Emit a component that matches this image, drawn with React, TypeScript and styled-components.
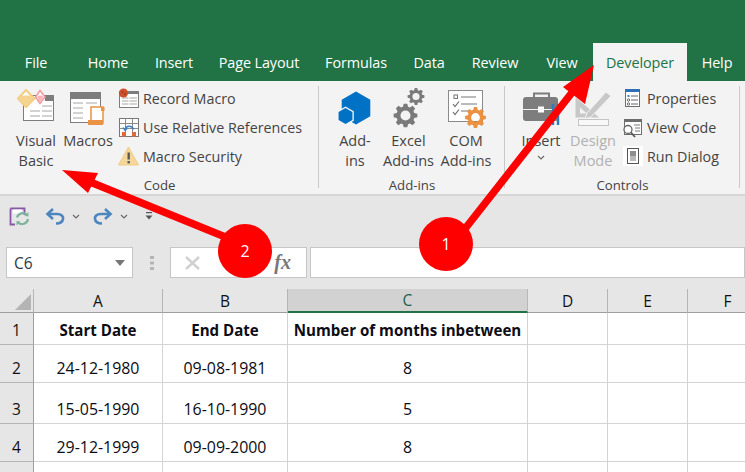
import React from "react";
import styled, { createGlobalStyle } from "styled-components";

const Global = createGlobalStyle`
  html, body { margin: 0; padding: 0; background: #fff; }
  * { box-sizing: border-box; }
`;
const FONT = `"Open Sans", "Noto Sans", "Liberation Sans", sans-serif`;

const Page = styled.div`
  position: relative; width: 745px; height: 472px; overflow: hidden;
  font-family: ${FONT}; color: #444; background: #e6e6e6;
`;
const TitleBar = styled.div`height: 43px; background: #217346;`;
const TabBar = styled.nav`display: flex; height: 38px; background: #217346;`;
const Tab = styled.div<{ $w: number; $ml?: number; $active?: boolean }>`
  width: ${p => p.$w}px; margin-left: ${p => p.$ml ?? 0}px; flex: none; display: flex; align-items: center; justify-content: center;
  font-size: 14.4px; letter-spacing: -0.1px; white-space: nowrap;
  color: ${p => (p.$active ? "#217346" : "#fff")};
  background: ${p => (p.$active ? "#f3f3f3" : "transparent")};
`;
const Ribbon = styled.div`
  display: flex; height: 115px; background: #f3f3f3; border-bottom: 2px solid #d6d6d6;
`;
const Group = styled.section<{ $w: number }>`
  width: ${p => p.$w}px; flex: none; display: flex; flex-direction: column; position: relative;
  &::after { content: ""; position: absolute; right: 0; top: 5px; bottom: 6px; width: 1px; background: #c9c9c9; }
`;
const GroupBody = styled.div<{ $pad: number }>`
  flex: 1; display: flex; padding-left: ${p => p.$pad}px; padding-top: 4px;
`;
const GroupLabel = styled.div`
  height: 23px; padding-top: 4px; display: flex; justify-content: center; align-items: center;
  font-size: 13.2px; color: #444;
`;
const BigButton = styled.div<{ $w: number; $off?: boolean }>`
  width: ${p => p.$w}px; flex: none; display: flex; flex-direction: column; align-items: center;
  color: ${p => (p.$off ? "#b1b1b1" : "#444")};
`;
const BigIcon = styled.div`height: 36px; margin-top: 4px; margin-bottom: 6px; width: 40px; flex: none;`;
const BigLabel = styled.div`
  font-size: 14.5px; line-height: 19.5px; text-align: center; white-space: nowrap;
`;
const Caret = styled.div`height: 14px; display: flex; justify-content: center; align-items: center;`;
const SmallStack = styled.div<{ $ml: number }>`display: flex; flex-direction: column; margin: -1px 0 0 ${p => p.$ml}px;`;
const SmallRow = styled.div`height: 29px; display: flex; align-items: center; gap: 3px; font-size: 14.3px; white-space: nowrap;`;
const SmallIcon = styled.div`width: 22px; height: 22px; flex: none;`;

const Qat = styled.div`display: flex; align-items: center; height: 44px; padding: 0 0 3px 9px;`;
const QatIcon = styled.div<{ $gap: number }>`margin-right: ${p => p.$gap}px; display: flex; flex: none;`;

const FormulaBar = styled.div`display: flex; height: 31px; margin-top: 7px; padding-left: 6px; align-items: stretch;`;
const Field = styled.div<{ $w?: number }>`
  ${p => (p.$w ? `width:${p.$w}px; flex:none;` : "flex:1;")}
  background: #fff; border: 1px solid #c6c6c6; display: flex; align-items: center;
`;
const NameBox = styled(Field)`
  justify-content: space-between; padding: 0 7px 0 7px; font-size: 15.5px; color: #2a3a48;
`;
const Grip = styled.div`width: 37px; flex: none; display: flex; justify-content: center; align-items: center;`;
const FxBox = styled(Field)`margin-right: 3px; justify-content: space-between; padding: 0 15px 0 14px;`;
const FxText = styled.span`font-family: "Liberation Serif", serif; font-style: italic; font-weight: 700; font-size: 20px; color: #777;`;

const Sheet = styled.div`
  display: grid; margin-top: 11px;
  grid-template-columns: 34px 129px 125px 240px 80px 80px 80px;
  grid-template-rows: 24px 32px 38px 41px 38px 30px;
`;
const Corner = styled.div`
  background: #e6e6e6; border-right: 1px solid #b5b5b5; border-bottom: 1px solid #9e9e9e;
  display: flex; align-items: flex-end; justify-content: flex-end; padding: 0 2px 2px 0;
`;
const ColHead = styled.div<{ $sel?: boolean }>`
  background: ${p => (p.$sel ? "#d2d2d2" : "#e6e6e6")};
  border-right: 1px solid ${p => (p.$sel ? "#b8b8b8" : "#b5b5b5")};
  border-bottom: ${p => (p.$sel ? "2px solid #217346" : "1px solid #9e9e9e")};
  display: flex; align-items: center; justify-content: center;
  font-size: 15.5px; color: ${p => (p.$sel ? "#1f5f4a" : "#111")};
`;
const RowHead = styled.div`
  background: #e6e6e6; border-right: 1px solid #9e9e9e; border-bottom: 1px solid #b5b5b5;
  display: flex; align-items: flex-end; justify-content: center; font-size: 15.5px; line-height: 20px;
  padding-bottom: 4px; color: #111;
`;
const Cell = styled.div<{ $bold?: boolean }>`
  background: #fff; border-right: 1px solid #d4d4d4; border-bottom: 1px solid #d4d4d4;
  display: flex; align-items: flex-end; justify-content: center; white-space: nowrap;
  line-height: 20px; padding-bottom: 4px;
  font-size: ${p => (p.$bold ? "15.1px" : "15.9px")}; font-weight: ${p => (p.$bold ? 700 : 400)}; color: #0c0c14;
`;

const Overlay = styled.svg`position: absolute; left: 0; top: 0; pointer-events: none;`;
const Badge = styled.div<{ $x: number; $y: number }>`
  position: absolute; left: ${p => p.$x - 27}px; top: ${p => p.$y - 27}px; width: 54px; height: 54px;
  border-radius: 50%; background: #fe0000; color: #fff; font-size: 16px;
  display: flex; align-items: center; justify-content: center;
`;

function gearPath(cx: number, cy: number, R: number, r: number, hole: number, teeth = 8) {
  let d = "";
  const step = (Math.PI * 2) / teeth;
  for (let i = 0; i < teeth; i++) {
    const a = i * step - Math.PI / 2;
    const w = step * 0.24;
    const pts = [
      [r, a - step * 0.36], [R, a - w * 0.8], [R, a + w * 0.8], [r, a + step * 0.36],
    ];
    pts.forEach(([rad, ang], j) => {
      const x = (cx + rad * Math.cos(ang)).toFixed(2);
      const y = (cy + rad * Math.sin(ang)).toFixed(2);
      d += `${i === 0 && j === 0 ? "M" : "L"}${x} ${y} `;
    });
  }
  d += `Z M${cx - hole} ${cy} a${hole} ${hole} 0 1 0 ${hole * 2} 0 a${hole} ${hole} 0 1 0 ${-hole * 2} 0 Z`;
  return d;
}
const Gear = (p: { cx: number; cy: number; R: number; fill: string }) => (
  <path d={gearPath(p.cx, p.cy, p.R, p.R * 0.76, p.R * 0.42)} fill={p.fill} fillRule="evenodd" />
);

const Ico = (p: { w?: number; h?: number; children: React.ReactNode }) => {
  const w = p.w ?? 40, h = p.h ?? 36;
  return <svg width={w} height={h} viewBox={`0 0 ${w} ${h}`} style={{ display: "block", overflow: "visible" }}>{p.children}</svg>;
};

const SheetLines = (p: { x: number; y: number; w: number; n: number; gap?: number; color?: string }) => (
  <>
    {Array.from({ length: p.n }).map((_, i) => (
      <line key={i} x1={p.x} x2={p.x + p.w} y1={p.y + i * (p.gap ?? 5)} y2={p.y + i * (p.gap ?? 5)} stroke={p.color ?? "#a6a6a6"} strokeWidth={1} />
    ))}
  </>
);

const VisualBasicIcon = () => (
  <Ico>
    <g transform="translate(0 -2)">
      <rect x="7.5" y="8.5" width="30" height="25" fill="#fff" stroke="#7d7d7d" />
      <rect x="29" y="8" width="9" height="6" fill="#7d7d7d" />
      <SheetLines x={14} y={24} w={10} n={2} gap={5} />
      <SheetLines x={26} y={19} w={10} n={3} gap={5} />
      <path d="M10 3 L18.5 11.5 L10 20 L2 11.5 Z" fill="#fff" stroke="#f3cd82" strokeWidth="2" />
      <path d="M3 11.5 L10 19 L17.5 11.5 L14 8.5 L6 8.5 Z" fill="#f5d48f" />
      <path d="M24 3.5 L29 10 L24 16.5 L19.5 10 Z" fill="#fff" stroke="#ee9aa0" strokeWidth="1.6" />
      <path d="M21 10 L24 15 L27.5 10 L25.5 8.5 L22.5 8.5 Z" fill="#f6b4b8" />
    </g>
  </Ico>
);
const MacrosIcon = () => (
  <Ico>
    <rect x="2.5" y="3.5" width="30" height="30" fill="#fff" stroke="#7d7d7d" />
    <rect x="2" y="3" width="31" height="7" fill="#7d7d7d" />
    <SheetLines x={5} y={14} w={10} n={4} gap={5} />
    <SheetLines x={18} y={14} w={11} n={1} />
    <rect x="23" y="18" width="12" height="16" fill="#fff" stroke="#ea9a4c" strokeWidth="1.6" />
    <rect x="33" y="18" width="3.5" height="4" fill="#ea9344" />
    <rect x="20" y="31" width="15" height="5" fill="#ea9344" />
  </Ico>
);
const RecordIcon = () => (
  <Ico w={22} h={22}>
    <rect x="1.5" y="3.5" width="19" height="16" fill="#fff" stroke="#7d7d7d" />
    <rect x="8" y="3" width="13" height="3" fill="#7d7d7d" />
    <SheetLines x={4} y={10} w={15} n={3} gap={3} />
    <line x1="11" x2="11" y1="7" y2="19" stroke="#fff" />
    <circle cx="5.5" cy="5" r="4.6" fill="#d0522c" />
    <circle cx="4.5" cy="4" r="1" fill="#a5341c" /><circle cx="7" cy="6" r="1" fill="#a5341c" />
  </Ico>
);
const RelativeIcon = () => (
  <Ico w={22} h={22}>
    <rect x="1.5" y="1.5" width="19" height="18" fill="#fff" stroke="#777" />
    <path d="M1.5 6.5H20.5M1.5 11.5H20.5M7.5 1.5V19.5M14.5 1.5V19.5" stroke="#8a8a8a" fill="none" />
    <rect x="4" y="15" width="4" height="4.5" fill="#e2683c" />
    <rect x="14" y="15" width="4" height="4.5" fill="#e2683c" />
    <path d="M7 12.5 C8 8.5 14 8 15.5 12.5" stroke="#3d7fc4" strokeWidth="1.5" fill="none" />
    <path d="M5 10.5 L7 13.5 L9.5 11" stroke="#3d7fc4" strokeWidth="1.3" fill="none" />
  </Ico>
);
const SecurityIcon = () => (
  <Ico w={22} h={22}>
    <path d="M10.5 1 L20.5 19 H0.5 Z" fill="#f5d79a" stroke="#f1cb84" strokeLinejoin="round" />
    <rect x="9.5" y="6.5" width="2.4" height="7" fill="#5a5a5a" />
    <rect x="9.5" y="15" width="2.4" height="2.4" fill="#5a5a5a" />
  </Ico>
);
const hex = (cx: number, cy: number, r: number) =>
  [0, 1, 2, 3, 4, 5].map(i => {
    const a = -Math.PI / 2 + (i * Math.PI) / 3;
    return `${(cx + r * Math.cos(a)).toFixed(2)},${(cy + r * Math.sin(a)).toFixed(2)}`;
  }).join(" ");
const AddInsIcon = () => (
  <Ico>
    <polygon points={hex(21, 19, 16.5)} fill="#0072c6" />
    <polygon points={hex(10.5, 27, 9.6)} fill="#f3f3f3" />
    <polygon points={hex(10.5, 27, 8)} fill="#0072c6" />
  </Ico>
);
const ExcelAddInsIcon = () => (
  <Ico>
    <Gear cx={16.5} cy={26.5} R={12} fill="#7a7a7a" />
    <Gear cx={27} cy={7.5} R={8.5} fill="#7a7a7a" />
  </Ico>
);
const ComIcon = () => (
  <Ico>
    <rect x="2.5" y="1.5" width="34" height="31" fill="#fff" stroke="#8a8a8a" />
    <rect x="8" y="6" width="3.5" height="3.5" fill="none" stroke="#777" />
    <path d="M15 8H30M15 15H31M15 22H24" stroke="#777" />
    <path d="M7 15 L9 17.5 L13 12.5M7 23 L9 25.5 L13 20.5" stroke="#6d6d6d" strokeWidth="1.2" fill="none" />
    <Gear cx={29.5} cy={28.5} R={10.5} fill="#ed9140" />
  </Ico>
);
const InsertIcon = () => (
  <Ico>
    <path d="M13 8 V4.5 H28 V8" fill="none" stroke="#7d7d7d" strokeWidth="2" />
    <rect x="2" y="8" width="35" height="24" rx="3" fill="#7d7d7d" />
    <rect x="17" y="17.5" width="6" height="6" fill="#fff" />
    <line x1="2" x2="37" y1="20.5" y2="20.5" stroke="#f3f3f3" />
    <path d="M32 15 V36 M37 15 V36" stroke="#2f7bbf" strokeWidth="2.4" />
  </Ico>
);
const DesignIcon = () => (
  <Ico>
    <path d="M2.5 8 V28.5 H26 Z M7 18.5 V24.5 H14 Z" fill="#c8c8c8" fillRule="evenodd" />
    <path d="M14 24 L33 3 L38 7 L18 28 L12 30 Z" fill="#c8c8c8" stroke="#f3f3f3" strokeWidth="1" />
    <rect x="5.5" y="30.5" width="30" height="6" fill="#f8f8f8" stroke="#c4c4c4" />
  </Ico>
);
const PropertiesIcon = () => (
  <Ico w={22} h={22}>
    <rect x="3.5" y="2.5" width="14" height="16" fill="#fff" stroke="#6d6d6d" />
    <rect x="3" y="1" width="15" height="3" fill="#2f6fb3" />
    <path d="M9 8H16M9 12H16M9 16H16" stroke="#666" />
    <rect x="5.5" y="7" width="2" height="2" fill="#3d7fc4" />
    <circle cx="6.5" cy="12" r="1.2" fill="none" stroke="#666" /><circle cx="6.5" cy="16" r="1.2" fill="none" stroke="#666" />
  </Ico>
);
const ViewCodeIcon = () => (
  <Ico w={22} h={22}>
    <rect x="2.5" y="2.5" width="17" height="15" fill="#fff" stroke="#6d6d6d" />
    <rect x="2" y="2" width="18" height="3" fill="#6d6d6d" />
    <path d="M12 8H18M13 11H18M13 14H18" stroke="#777" />
    <circle cx="6" cy="12.5" r="4" fill="#fff" stroke="#666" strokeWidth="1.3" />
    <path d="M9 15.5 L13 20" stroke="#555" strokeWidth="1.8" />
  </Ico>
);
const RunDialogIcon = () => (
  <Ico w={22} h={22}>
    <rect x="1" y="0" width="20" height="20" fill="#fff" />
    <rect x="5.5" y="2.5" width="11" height="15" fill="#fff" stroke="#555" />
    <rect x="8" y="5" width="6" height="10" fill="#b9b9b9" />
    <rect x="8" y="5" width="6" height="5" fill="#8d8d8d" />
  </Ico>
);

const TinyCaret = () => (
  <svg width="8" height="5" viewBox="0 0 8 5"><path d="M1 1 L4 4 L7 1" stroke="#666" strokeWidth="1.1" fill="none" /></svg>
);

const SaveIcon = () => (
  <svg width="21" height="20" viewBox="0 0 21 20">
    <path d="M1.5 1.5 H15.5 V8 M6 17.5 H1.5 V1.5" fill="none" stroke="#8a57a8" strokeWidth="1.8" />
    <rect x="4" y="2.5" width="9" height="4" fill="#fff" />
    <path d="M8 10.5 A 6 6 0 0 1 18 8 M19 12 A 6 6 0 0 1 9 15.5" stroke="#7fb39e" strokeWidth="2.2" fill="none" />
    <path d="M15.5 9 L19.5 9.5 L19.5 5 Z M11.5 14.5 L7.5 14 L7.5 18.5 Z" fill="#7fb39e" />
  </svg>
);
const UndoIcon = () => (
  <svg width="20" height="17" viewBox="0 0 20 17">
    <path d="M3 6 H12 C17 6 18.5 9 18 11 C17.5 14 15 15.5 11 15.5" fill="none" stroke="#4d86bf" strokeWidth="2.6" />
    <path d="M8 1 L2.5 6 L8 11" fill="none" stroke="#4d86bf" strokeWidth="2.6" />
  </svg>
);
const RedoIcon = () => (
  <svg width="20" height="17" viewBox="0 0 20 17" style={{ transform: "scaleX(-1)" }}>
    <path d="M3 6 H12 C17 6 18.5 9 18 11 C17.5 14 15 15.5 11 15.5" fill="none" stroke="#4d86bf" strokeWidth="2.6" />
    <path d="M8 1 L2.5 6 L8 11" fill="none" stroke="#4d86bf" strokeWidth="2.6" />
  </svg>
);
const Customize = () => (
  <svg width="8" height="9" viewBox="0 0 8 9">
    <rect x="1" y="0" width="6" height="1.2" fill="#555" /><path d="M0.5 3.5 H7.5 L4 7.5 Z" fill="#555" />
  </svg>
);

const tabs: [string, number, number][] = [
  ["File", 72, 0], ["Home", 72, 0], ["Insert", 60, 0], ["Page Layout", 110, 0], ["Formulas", 84, 0], ["Data", 46, 8],
  ["Review", 86, 0], ["View", 48, 0], ["Developer", 94, 7], ["Help", 60, 0],
];

export default function App() {
  return (
    <Page>
      <Global />
      <TitleBar />
      <TabBar>
        {tabs.map(([t, w, ml]) => <Tab key={t} $w={w} $ml={ml} $active={t === "Developer"}>{t}</Tab>)}
      </TabBar>
      <Ribbon>
        <Group $w={319}>
          <GroupBody $pad={9}>
            <BigButton $w={54}><BigIcon><VisualBasicIcon /></BigIcon><BigLabel>Visual<br />Basic</BigLabel></BigButton>
            <BigButton $w={50}><BigIcon><MacrosIcon /></BigIcon><BigLabel>Macros</BigLabel></BigButton>
            <SmallStack $ml={5}>
              <SmallRow><SmallIcon><RecordIcon /></SmallIcon>Record Macro</SmallRow>
              <SmallRow><SmallIcon><RelativeIcon /></SmallIcon>Use Relative References</SmallRow>
              <SmallRow><SmallIcon><SecurityIcon /></SmallIcon>Macro Security</SmallRow>
            </SmallStack>
          </GroupBody>
          <GroupLabel>Code</GroupLabel>
        </Group>
        <Group $w={186}>
          <GroupBody $pad={11}>
            <BigButton $w={50}><BigIcon><AddInsIcon /></BigIcon><BigLabel>Add-<br />ins</BigLabel></BigButton>
            <BigButton $w={57}><BigIcon><ExcelAddInsIcon /></BigIcon><BigLabel>Excel<br />Add-ins</BigLabel></BigButton>
            <BigButton $w={58}><BigIcon><ComIcon /></BigIcon><BigLabel>COM<br />Add-ins</BigLabel></BigButton>
          </GroupBody>
          <GroupLabel>Add-ins</GroupLabel>
        </Group>
        <Group $w={235}>
          <GroupBody $pad={11}>
            <BigButton $w={50}><BigIcon><InsertIcon /></BigIcon><BigLabel>Insert</BigLabel><Caret><TinyCaret /></Caret></BigButton>
            <BigButton $w={54} $off><BigIcon><DesignIcon /></BigIcon><BigLabel>Design<br />Mode</BigLabel></BigButton>
            <SmallStack $ml={2}>
              <SmallRow><SmallIcon><PropertiesIcon /></SmallIcon>Properties</SmallRow>
              <SmallRow><SmallIcon><ViewCodeIcon /></SmallIcon>View Code</SmallRow>
              <SmallRow><SmallIcon><RunDialogIcon /></SmallIcon>Run Dialog</SmallRow>
            </SmallStack>
          </GroupBody>
          <GroupLabel>Controls</GroupLabel>
        </Group>
      </Ribbon>
      <Qat>
        <QatIcon $gap={15}><SaveIcon /></QatIcon>
        <QatIcon $gap={7}><UndoIcon /></QatIcon>
        <QatIcon $gap={13}><TinyCaret /></QatIcon>
        <QatIcon $gap={7}><RedoIcon /></QatIcon>
        <QatIcon $gap={17}><TinyCaret /></QatIcon>
        <QatIcon $gap={0}><Customize /></QatIcon>
      </Qat>
      <FormulaBar>
        <NameBox $w={127}>C6<svg width="10" height="6" viewBox="0 0 10 6"><path d="M0 0H10L5 6Z" fill="#777" /></svg></NameBox>
        <Grip><svg width="4" height="14" viewBox="0 0 4 14"><path d="M0 0h4v3H0zM0 5.5h4v3H0zM0 11h4v3H0z" fill="#b5b5b5" /></svg></Grip>
        <FxBox $w={137}>
          <svg width="15" height="14" viewBox="0 0 15 14"><path d="M1 1 L14 13 M14 1 L1 13" stroke="#d0d0d0" strokeWidth="2.4" /></svg>
          <FxText>fx</FxText>
        </FxBox>
        <Field />
      </FormulaBar>
      <Sheet>
        <Corner><svg width="16" height="16" viewBox="0 0 16 16"><path d="M16 0V16H0Z" fill="#b4b4b4" /></svg></Corner>
        <ColHead>A</ColHead><ColHead>B</ColHead><ColHead $sel>C</ColHead><ColHead>D</ColHead><ColHead>E</ColHead><ColHead>F</ColHead>
        <RowHead>1</RowHead><Cell $bold>Start Date</Cell><Cell $bold>End Date</Cell><Cell $bold>Number of months inbetween</Cell><Cell /><Cell /><Cell />
        <RowHead>2</RowHead><Cell>24-12-1980</Cell><Cell>09-08-1981</Cell><Cell>8</Cell><Cell /><Cell /><Cell />
        <RowHead>3</RowHead><Cell>15-05-1990</Cell><Cell>16-10-1990</Cell><Cell>5</Cell><Cell /><Cell /><Cell />
        <RowHead>4</RowHead><Cell>29-12-1999</Cell><Cell>09-09-2000</Cell><Cell>8</Cell><Cell /><Cell /><Cell />
        <RowHead /><Cell /><Cell /><Cell /><Cell /><Cell /><Cell />
      </Sheet>
      <Overlay width="745" height="472" viewBox="0 0 745 472">
        <line x1="446" y1="253" x2="574" y2="90" stroke="#fe0000" strokeWidth="7.5" />
        <polygon points="594,65 563,87 585,104" fill="#fe0000" />
        <line x1="245" y1="245" x2="84" y2="179.5" stroke="#fe0000" strokeWidth="7.5" />
        <polygon points="62,170 98,173 88,193" fill="#fe0000" />
      </Overlay>
      <Badge $x={446} $y={244}>1</Badge>
      <Badge $x={245} $y={251}>2</Badge>
    </Page>
  );
}
